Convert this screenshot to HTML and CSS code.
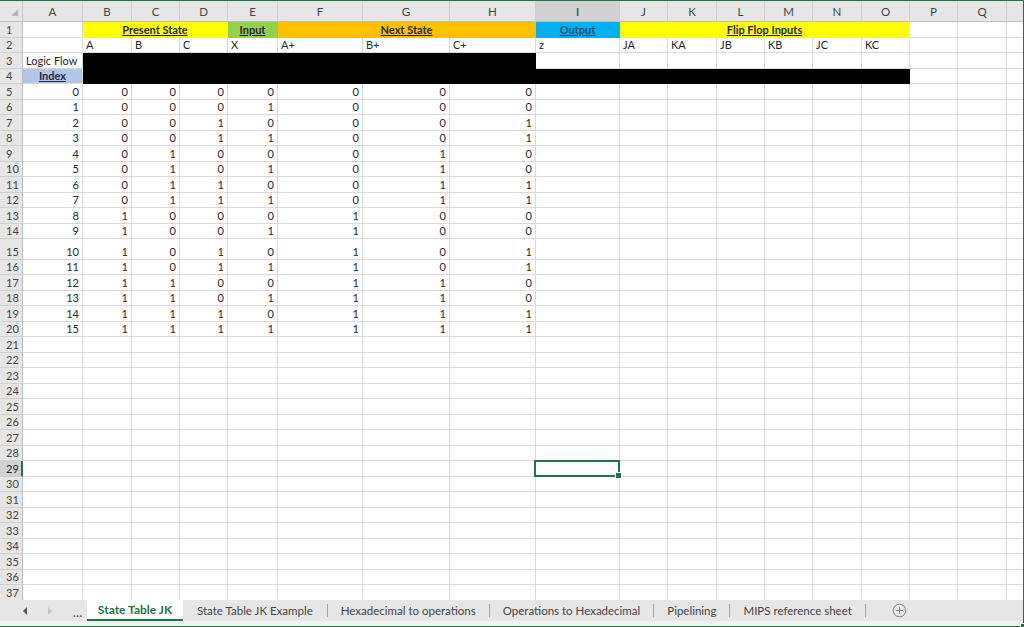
FILE: index.html
```html
<!DOCTYPE html>
<html>
<head>
<meta charset="utf-8">
<link rel="stylesheet" href="styles.css">
</head>
<body>
<div class="app">
<div class="sheet">
<div class="corner"><svg width="23" height="22" viewBox="0 0 23 22"><polygon points="19,10 19,17 12,17" fill="#b3b3b3"/></svg></div>
<div class="ch">A</div><div class="ch">B</div><div class="ch">C</div><div class="ch">D</div><div class="ch">E</div><div class="ch">F</div><div class="ch">G</div><div class="ch">H</div><div class="ch sel">I</div><div class="ch">J</div><div class="ch">K</div><div class="ch">L</div><div class="ch">M</div><div class="ch">N</div><div class="ch">O</div><div class="ch">P</div><div class="ch">Q</div><div class="ch"></div>

<div class="rh">1</div><div></div><div class="title yellow span3">Present State</div><div class="title green">Input</div><div class="title orange span3">Next State</div><div class="title blue out">Output</div><div class="title yellow span6">Flip Flop Inputs</div><div></div><div></div><div></div>

<div class="rh">2</div><div></div><div>A</div><div>B</div><div>C</div><div>X</div><div>A+</div><div>B+</div><div>C+</div><div>z</div><div>JA</div><div>KA</div><div>JB</div><div>KB</div><div>JC</div><div>KC</div><div></div><div></div><div></div>

<div class="rh">3</div><div>Logic Flow</div><div class="black span7"></div><div></div><div></div><div></div><div></div><div></div><div></div><div></div><div></div><div></div><div></div>

<div class="rh">4</div><div class="idx">Index</div><div class="black span14"></div><div></div><div></div><div></div>

<div class="rh">5</div><div class="n">0</div><div class="n">0</div><div class="n">0</div><div class="n">0</div><div class="n">0</div><div class="n">0</div><div class="n">0</div><div class="n">0</div><div></div><div></div><div></div><div></div><div></div><div></div><div></div><div></div><div></div><div></div>
<div class="rh">6</div><div class="n">1</div><div class="n">0</div><div class="n">0</div><div class="n">0</div><div class="n">1</div><div class="n">0</div><div class="n">0</div><div class="n">0</div><div></div><div></div><div></div><div></div><div></div><div></div><div></div><div></div><div></div><div></div>
<div class="rh">7</div><div class="n">2</div><div class="n">0</div><div class="n">0</div><div class="n">1</div><div class="n">0</div><div class="n">0</div><div class="n">0</div><div class="n">1</div><div></div><div></div><div></div><div></div><div></div><div></div><div></div><div></div><div></div><div></div>
<div class="rh">8</div><div class="n">3</div><div class="n">0</div><div class="n">0</div><div class="n">1</div><div class="n">1</div><div class="n">0</div><div class="n">0</div><div class="n">1</div><div></div><div></div><div></div><div></div><div></div><div></div><div></div><div></div><div></div><div></div>
<div class="rh">9</div><div class="n">4</div><div class="n">0</div><div class="n">1</div><div class="n">0</div><div class="n">0</div><div class="n">0</div><div class="n">1</div><div class="n">0</div><div></div><div></div><div></div><div></div><div></div><div></div><div></div><div></div><div></div><div></div>
<div class="rh">10</div><div class="n">5</div><div class="n">0</div><div class="n">1</div><div class="n">0</div><div class="n">1</div><div class="n">0</div><div class="n">1</div><div class="n">0</div><div></div><div></div><div></div><div></div><div></div><div></div><div></div><div></div><div></div><div></div>
<div class="rh">11</div><div class="n">6</div><div class="n">0</div><div class="n">1</div><div class="n">1</div><div class="n">0</div><div class="n">0</div><div class="n">1</div><div class="n">1</div><div></div><div></div><div></div><div></div><div></div><div></div><div></div><div></div><div></div><div></div>
<div class="rh">12</div><div class="n">7</div><div class="n">0</div><div class="n">1</div><div class="n">1</div><div class="n">1</div><div class="n">0</div><div class="n">1</div><div class="n">1</div><div></div><div></div><div></div><div></div><div></div><div></div><div></div><div></div><div></div><div></div>
<div class="rh">13</div><div class="n">8</div><div class="n">1</div><div class="n">0</div><div class="n">0</div><div class="n">0</div><div class="n">1</div><div class="n">0</div><div class="n">0</div><div></div><div></div><div></div><div></div><div></div><div></div><div></div><div></div><div></div><div></div>
<div class="rh">14</div><div class="n">9</div><div class="n">1</div><div class="n">0</div><div class="n">0</div><div class="n">1</div><div class="n">1</div><div class="n">0</div><div class="n">0</div><div></div><div></div><div></div><div></div><div></div><div></div><div></div><div></div><div></div><div></div>
<div class="rh">15</div><div class="n">10</div><div class="n">1</div><div class="n">0</div><div class="n">1</div><div class="n">0</div><div class="n">1</div><div class="n">0</div><div class="n">1</div><div></div><div></div><div></div><div></div><div></div><div></div><div></div><div></div><div></div><div></div>
<div class="rh">16</div><div class="n">11</div><div class="n">1</div><div class="n">0</div><div class="n">1</div><div class="n">1</div><div class="n">1</div><div class="n">0</div><div class="n">1</div><div></div><div></div><div></div><div></div><div></div><div></div><div></div><div></div><div></div><div></div>
<div class="rh">17</div><div class="n">12</div><div class="n">1</div><div class="n">1</div><div class="n">0</div><div class="n">0</div><div class="n">1</div><div class="n">1</div><div class="n">0</div><div></div><div></div><div></div><div></div><div></div><div></div><div></div><div></div><div></div><div></div>
<div class="rh">18</div><div class="n">13</div><div class="n">1</div><div class="n">1</div><div class="n">0</div><div class="n">1</div><div class="n">1</div><div class="n">1</div><div class="n">0</div><div></div><div></div><div></div><div></div><div></div><div></div><div></div><div></div><div></div><div></div>
<div class="rh">19</div><div class="n">14</div><div class="n">1</div><div class="n">1</div><div class="n">1</div><div class="n">0</div><div class="n">1</div><div class="n">1</div><div class="n">1</div><div></div><div></div><div></div><div></div><div></div><div></div><div></div><div></div><div></div><div></div>
<div class="rh">20</div><div class="n">15</div><div class="n">1</div><div class="n">1</div><div class="n">1</div><div class="n">1</div><div class="n">1</div><div class="n">1</div><div class="n">1</div><div></div><div></div><div></div><div></div><div></div><div></div><div></div><div></div><div></div><div></div>

<div class="rh">21</div><div></div><div></div><div></div><div></div><div></div><div></div><div></div><div></div><div></div><div></div><div></div><div></div><div></div><div></div><div></div><div></div><div></div><div></div>
<div class="rh">22</div><div></div><div></div><div></div><div></div><div></div><div></div><div></div><div></div><div></div><div></div><div></div><div></div><div></div><div></div><div></div><div></div><div></div><div></div>
<div class="rh">23</div><div></div><div></div><div></div><div></div><div></div><div></div><div></div><div></div><div></div><div></div><div></div><div></div><div></div><div></div><div></div><div></div><div></div><div></div>
<div class="rh">24</div><div></div><div></div><div></div><div></div><div></div><div></div><div></div><div></div><div></div><div></div><div></div><div></div><div></div><div></div><div></div><div></div><div></div><div></div>
<div class="rh">25</div><div></div><div></div><div></div><div></div><div></div><div></div><div></div><div></div><div></div><div></div><div></div><div></div><div></div><div></div><div></div><div></div><div></div><div></div>
<div class="rh">26</div><div></div><div></div><div></div><div></div><div></div><div></div><div></div><div></div><div></div><div></div><div></div><div></div><div></div><div></div><div></div><div></div><div></div><div></div>
<div class="rh">27</div><div></div><div></div><div></div><div></div><div></div><div></div><div></div><div></div><div></div><div></div><div></div><div></div><div></div><div></div><div></div><div></div><div></div><div></div>
<div class="rh">28</div><div></div><div></div><div></div><div></div><div></div><div></div><div></div><div></div><div></div><div></div><div></div><div></div><div></div><div></div><div></div><div></div><div></div><div></div>
<div class="rh sel">29</div><div></div><div></div><div></div><div></div><div></div><div></div><div></div><div></div><div class="active"></div><div></div><div></div><div></div><div></div><div></div><div></div><div></div><div></div><div></div>
<div class="rh">30</div><div></div><div></div><div></div><div></div><div></div><div></div><div></div><div></div><div></div><div></div><div></div><div></div><div></div><div></div><div></div><div></div><div></div><div></div>
<div class="rh">31</div><div></div><div></div><div></div><div></div><div></div><div></div><div></div><div></div><div></div><div></div><div></div><div></div><div></div><div></div><div></div><div></div><div></div><div></div>
<div class="rh">32</div><div></div><div></div><div></div><div></div><div></div><div></div><div></div><div></div><div></div><div></div><div></div><div></div><div></div><div></div><div></div><div></div><div></div><div></div>
<div class="rh">33</div><div></div><div></div><div></div><div></div><div></div><div></div><div></div><div></div><div></div><div></div><div></div><div></div><div></div><div></div><div></div><div></div><div></div><div></div>
<div class="rh">34</div><div></div><div></div><div></div><div></div><div></div><div></div><div></div><div></div><div></div><div></div><div></div><div></div><div></div><div></div><div></div><div></div><div></div><div></div>
<div class="rh">35</div><div></div><div></div><div></div><div></div><div></div><div></div><div></div><div></div><div></div><div></div><div></div><div></div><div></div><div></div><div></div><div></div><div></div><div></div>
<div class="rh">36</div><div></div><div></div><div></div><div></div><div></div><div></div><div></div><div></div><div></div><div></div><div></div><div></div><div></div><div></div><div></div><div></div><div></div><div></div>
<div class="rh">37</div><div></div><div></div><div></div><div></div><div></div><div></div><div></div><div></div><div></div><div></div><div></div><div></div><div></div><div></div><div></div><div></div><div></div><div></div>
</div>

<div class="tabs">
  <div class="nav">
    <span class="arrow-left"></span>
    <span class="arrow-right"></span>
    <span class="more">...</span>
  </div>
  <div class="tab active">State Table JK</div>
  <div class="tab">State Table JK Example</div>
  <span class="sep"></span>
  <div class="tab">Hexadecimal to operations</div>
  <span class="sep"></span>
  <div class="tab">Operations to Hexadecimal</div>
  <span class="sep"></span>
  <div class="tab">Pipelining</div>
  <span class="sep"></span>
  <div class="tab">MIPS reference sheet</div>
  <span class="sep"></span>
  <div class="add"><svg width="15" height="15" viewBox="0 0 15 15"><circle cx="7.5" cy="7.5" r="6.3" fill="none" stroke="#808080" stroke-width="1"/><path d="M7.5 4.2v6.6M4.2 7.5h6.6" stroke="#808080" stroke-width="1"/></svg></div>
</div>
</div>
</body>
</html>
```

FILE: styles.css
```css
html, body {
  margin: 0;
  padding: 0;
  background: #ffffff;
}

.app {
  width: 1024px;
  height: 627px;
  display: flex;
  flex-direction: column;
  overflow: hidden;
  font-family: Lato, "Liberation Sans", sans-serif;
}

.sheet {
  flex: 1;
  min-height: 0;
  overflow: hidden;
  display: grid;
  grid-template-columns: 23px 60px 49px 48px 48px 50px 85px 87px 86px 84px 48px 49px 48px 48px 49px 48px 48px 49px 1fr;
  grid-template-rows: 22px repeat(14, 15.5px) 20.5px repeat(22, 15.5px);
  align-content: start;
  font-size: 11px;
  color: #262626;
}

.sheet > div {
  box-sizing: border-box;
  border-right: 1px solid #d9d9d9;
  border-bottom: 1px solid #d9d9d9;
  display: flex;
  align-items: flex-end;
  padding: 0 3px 1px 3px;
  line-height: 13px;
  white-space: nowrap;
  min-width: 0;
}

.sheet > .corner {
  padding: 0;
  background: #e6e6e6;
  border-color: #c8c8c8;
  border-bottom-color: #bdbdbd;
}

.corner svg {
  display: block;
}

.sheet > .ch {
  background: #e6e6e6;
  border-right-color: #cfcfcf;
  border-bottom-color: #bdbdbd;
  justify-content: center;
  padding-bottom: 3px;
  font-size: 11.5px;
  color: #444444;
}

.sheet > .ch.sel {
  background: #d2d2d2;
  color: #262626;
}

.sheet > .rh {
  background: #e6e6e6;
  border-bottom-color: #cfcfcf;
  border-right-color: #bdbdbd;
  padding-left: 6px;
  font-size: 11px;
  color: #444444;
}

.sheet > .rh.sel {
  background: #d2d2d2;
  border-right: 2px solid #217346;
  color: #262626;
}

.sheet > .n {
  justify-content: flex-end;
}

.sheet > .title {
  justify-content: center;
  font-weight: bold;
  text-decoration: underline;
  color: #262626;
}

.span3 { grid-column: span 3; }
.span6 { grid-column: span 6; }
.span7 { grid-column: span 7; }
.span14 { grid-column: span 14; }

.sheet > .yellow { background: #ffff00; border-color: #ffff00; }
.sheet > .green { background: #92d050; border-color: #92d050; }
.sheet > .orange { background: #ffc000; border-color: #ffc000; }
.sheet > .blue { background: #00b0f0; border-color: #00b0f0; }
.sheet > .out { color: #1f4e79; }
.sheet > .black { background: #000000; border-color: #000000; }

.sheet > .idx {
  background: #b4c6e7;
  justify-content: center;
  font-weight: bold;
  text-decoration: underline;
  color: #1c2a48;
}

.sheet > .active {
  position: relative;
}

.active::after {
  content: "";
  position: absolute;
  left: -2px;
  top: -1px;
  right: -1px;
  bottom: -1px;
  border: 2px solid #217346;
}

.active::before {
  content: "";
  position: absolute;
  right: -3px;
  bottom: -3px;
  width: 5px;
  height: 5px;
  background: #217346;
  border: 1px solid #ffffff;
  z-index: 2;
}

.tabs {
  box-sizing: border-box;
  height: 27px;
  flex: none;
  display: flex;
  align-items: stretch;
  background: #e6e6e6;
  border-bottom: 6px solid #f0f0f0;
  font-size: 11.5px;
  color: #444444;
}

.nav {
  width: 87px;
  display: flex;
  align-items: center;
  padding-left: 23px;
  box-sizing: border-box;
}

.arrow-left {
  width: 0;
  height: 0;
  border-top: 4px solid transparent;
  border-bottom: 4px solid transparent;
  border-right: 4px solid #555555;
}

.arrow-right {
  width: 0;
  height: 0;
  margin-left: 21px;
  border-top: 4px solid transparent;
  border-bottom: 4px solid transparent;
  border-left: 4px solid #c4c4c4;
}

.more {
  margin-left: 21px;
  font-weight: bold;
  color: #555555;
  letter-spacing: 0.5px;
  padding-top: 3px;
}

.tab {
  display: flex;
  align-items: center;
  padding: 0 14px;
  white-space: nowrap;
}

.tab.active {
  box-sizing: border-box;
  width: 96px;
  justify-content: center;
  padding: 0 4px;
  background: #ffffff;
  color: #217346;
  font-weight: bold;
  font-size: 12px;
  border-bottom: 2px solid #217346;
}

.sep {
  width: 1px;
  height: 13px;
  align-self: center;
  background: #a6a6a6;
}

.tab + .sep + .tab {
  padding: 0 13px;
}

.add {
  display: flex;
  align-items: center;
  margin-left: 26px;
}

.add svg {
  display: block;
}
```
